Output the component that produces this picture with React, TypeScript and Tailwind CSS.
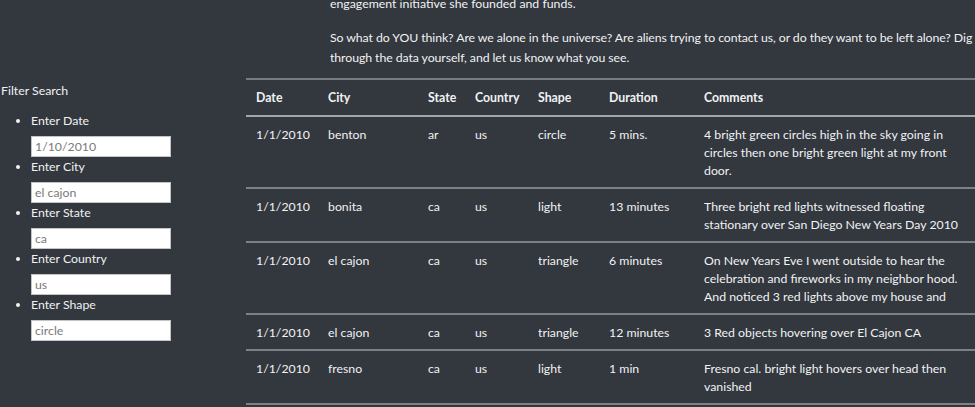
import React from "react";

interface Sighting {
  date: string;
  city: string;
  state: string;
  country: string;
  shape: string;
  duration: string;
  comments: string[];
}

const rows: Sighting[] = [
  {
    date: "1/1/2010",
    city: "benton",
    state: "ar",
    country: "us",
    shape: "circle",
    duration: "5 mins.",
    comments: [
      "4 bright green circles high in the sky going in",
      "circles then one bright green light at my front",
      "door.",
    ],
  },
  {
    date: "1/1/2010",
    city: "bonita",
    state: "ca",
    country: "us",
    shape: "light",
    duration: "13 minutes",
    comments: [
      "Three bright red lights witnessed floating",
      "stationary over San Diego New Years Day 2010",
    ],
  },
  {
    date: "1/1/2010",
    city: "el cajon",
    state: "ca",
    country: "us",
    shape: "triangle",
    duration: "6 minutes",
    comments: [
      "On New Years Eve I went outside to hear the",
      "celebration and fireworks in my neighbor hood.",
      "And noticed 3 red lights above my house and",
    ],
  },
  {
    date: "1/1/2010",
    city: "el cajon",
    state: "ca",
    country: "us",
    shape: "triangle",
    duration: "12 minutes",
    comments: ["3 Red objects hovering over El Cajon CA"],
  },
  {
    date: "1/1/2010",
    city: "fresno",
    state: "ca",
    country: "us",
    shape: "light",
    duration: "1 min",
    comments: ["Fresno cal. bright light hovers over head then", "vanished"],
  },
];

const filters = [
  { label: "Enter Date", placeholder: "1/10/2010" },
  { label: "Enter City", placeholder: "el cajon" },
  { label: "Enter State", placeholder: "ca" },
  { label: "Enter Country", placeholder: "us" },
  { label: "Enter Shape", placeholder: "circle" },
];

const cols = [
  { name: "Date", w: "w-[72px]" },
  { name: "City", w: "w-[100px]" },
  { name: "State", w: "w-[47px]" },
  { name: "Country", w: "w-[63px]" },
  { name: "Shape", w: "w-[71px]" },
  { name: "Duration", w: "w-[95px]" },
  { name: "Comments", w: "w-[281px]" },
];

export default function App() {
  return (
    <div
      className="h-[407px] w-[975px] overflow-hidden bg-[#33373e] text-[12.3px] text-[#f1f2f3] flex"
      style={{ fontFamily: "Lato, 'Open Sans', sans-serif" }}
    >
      <aside className="w-[246px] shrink-0 pt-[81px]">
        <div className="pl-[1px] leading-[20px]">Filter Search</div>
        <ul className="list-disc pl-[31px] mt-[10px]">
          {filters.map((f) => (
            <li key={f.label} className="leading-[20px]">
              {f.label}
              <input
                className="mt-[5px] block w-[140px] h-[21px] bg-white border border-[#c4c4c4] px-[3px] text-[12.3px] text-[#555] placeholder:text-[#7a7a7a] outline-none"
                placeholder={f.placeholder}
              />
            </li>
          ))}
        </ul>
      </aside>

      <main className="flex-1 min-w-0 -mt-[6px]">
        <div className="pl-[84px] leading-[20px]">
          <p>engagement initiative she founded and funds.</p>
          <p className="mt-[14px] whitespace-nowrap tracking-[-0.08px]">
            So what do YOU think? Are we alone in the universe? Are aliens trying to contact us, or do they want to be left alone? Dig
            <br />
            through the data yourself, and let us know what you see.
          </p>
        </div>

        <table className="mt-[10px] border-collapse table-fixed w-[729px] leading-[18px]">
          <thead>
            <tr className="border-t-2 border-t-[#777b81] border-b-2 border-b-[#a3a6aa]">
              {cols.map((c) => (
                <th key={c.name} className={`${c.w} text-left font-bold px-[10px] pt-[9px] pb-[8px]`}>
                  {c.name}
                </th>
              ))}
            </tr>
          </thead>
          <tbody>
            {rows.map((r, i) => (
              <tr key={i} className="border-b-2 border-b-[#7d8086] align-top">
                <td className="px-[10px] pt-[9px] pb-[7px]">{r.date}</td>
                <td className="px-[10px] pt-[9px] pb-[7px]">{r.city}</td>
                <td className="px-[10px] pt-[9px] pb-[7px]">{r.state}</td>
                <td className="px-[10px] pt-[9px] pb-[7px]">{r.country}</td>
                <td className="px-[10px] pt-[9px] pb-[7px]">{r.shape}</td>
                <td className="px-[10px] pt-[9px] pb-[7px] whitespace-nowrap">{r.duration}</td>
                <td className="px-[10px] pt-[9px] pb-[7px] whitespace-nowrap">
                  {r.comments.map((line, j) => (
                    <div key={j}>{line}</div>
                  ))}
                </td>
              </tr>
            ))}
          </tbody>
        </table>
      </main>
    </div>
  );
}
